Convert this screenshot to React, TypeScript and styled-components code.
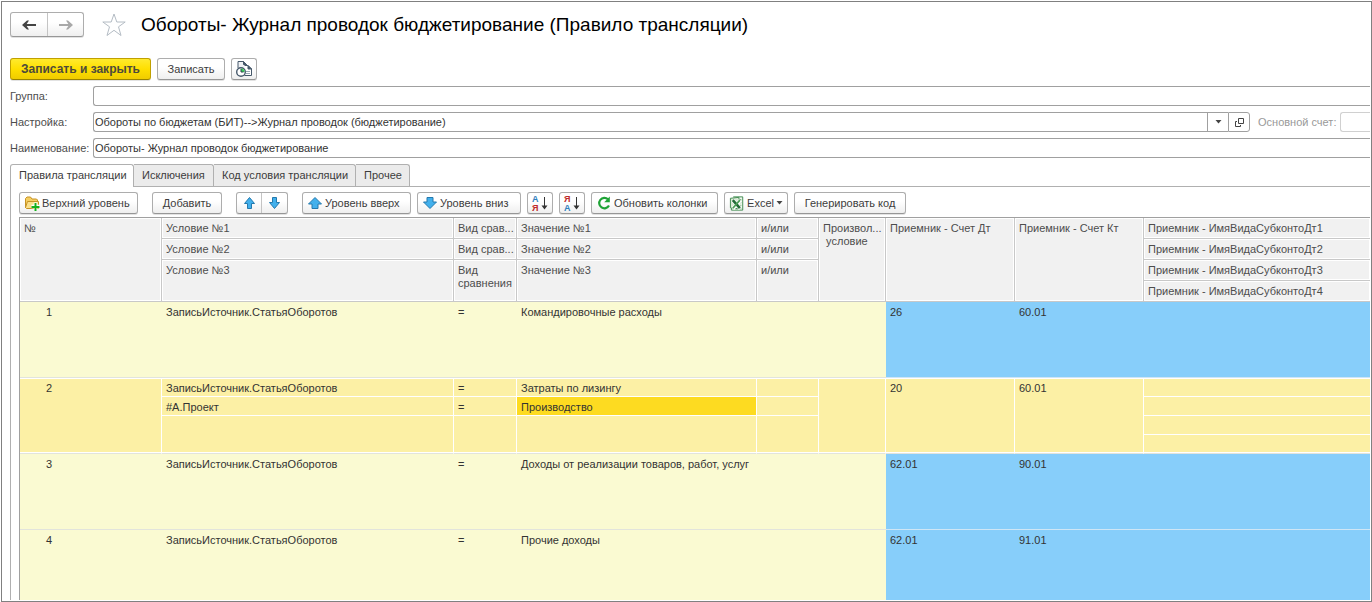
import React from "react";
import styled, { createGlobalStyle, css } from "styled-components";

const GlobalStyle = createGlobalStyle`
  *, *::before, *::after { box-sizing: border-box; }
  body {
    margin: 0;
    background: #fff;
    color: #3c3c3c;
    font-family: "Liberation Sans", Arial, sans-serif;
    font-size: 11px;
    line-height: 13px;
  }
  button, input { font: inherit; color: inherit; margin: 0; }
`;

const LINE = "#a0a0a0";

const Frame = styled.div`
  padding: 1px 0 0 1px;
  height: 100vh;
`;

const Window = styled.main`
  display: flex;
  flex-direction: column;
  height: 100%;
  padding: 10px 1px 1px 8px;
  border: 1px solid #808080;
  overflow: hidden;
`;

const Header = styled.header`
  display: flex;
  align-items: center;
  height: 25px;
  margin-bottom: 21px;
`;

const raised = css`
  border: 1px solid #adadad;
  border-bottom-color: #979797;
  border-radius: 3px;
  background: linear-gradient(#fff 40%, #efefef);
  box-shadow: 0 1px 0 #e2e2e2;
`;

const ButtonGroup = styled.div<{ $height: number }>`
  ${raised}
  display: flex;
  flex: none;
  height: ${(p) => p.$height}px;
  overflow: hidden;
`;

const GroupButton = styled.button<{ $width: number }>`
  display: flex;
  align-items: center;
  justify-content: center;
  width: ${(p) => p.$width}px;
  padding: 0;
  border: 0;
  background: none;
  & + & { border-left: 1px solid #c4c4c4; }
`;

const StarButton = styled.button`
  display: flex;
  margin: 0 15px 0 18px;
  padding: 0;
  border: 0;
  background: none;
`;

const Title = styled.h1`
  margin: 0;
  color: #000;
  font-size: 19px;
  font-weight: 400;
  line-height: 24px;
  white-space: nowrap;
`;

const Bar = styled.div`
  display: flex;
  gap: 6px;
`;

const Button = styled.button<{ $width: number; $icon?: boolean; $primary?: boolean }>`
  ${raised}
  display: flex;
  flex: none;
  align-items: center;
  justify-content: ${(p) => (p.$icon ? "flex-start" : "center")};
  gap: 2px;
  width: ${(p) => p.$width}px;
  height: 22px;
  padding: ${(p) => (p.$icon ? "0 4px" : "0")};
  white-space: nowrap;
  ${(p) =>
    p.$primary &&
    css`
      border-color: #c0a000;
      border-bottom-color: #9a8300;
      background: linear-gradient(#ffea2e, #ffdf00 50%, #f0cc00);
      color: #4d4a3c;
      font-size: 12px;
      font-weight: 700;
    `}
`;

const MenuMark = styled.span`
  display: flex;
  margin-left: auto;
`;

const Fields = styled.div`
  display: grid;
  grid-template-columns: 83px minmax(0, 1fr);
  row-gap: 6px;
  margin: 6px 0;
  align-items: center;
`;

const Label = styled.label<{ $muted?: boolean }>`
  white-space: nowrap;
  color: ${(p) => (p.$muted ? "#999" : "#4d4d4d")};
`;

const TextBox = styled.input<{ $faint?: boolean }>`
  width: 100%;
  height: 20px;
  padding: 0 1px;
  border: 1px solid ${(p) => (p.$faint ? "#d0d0d0" : LINE)};
  border-right: 0;
  border-radius: 3px 0 0 3px;
  background: #fff;
  color: #333;
  outline: 0;
`;

const SettingRow = styled.div`
  display: grid;
  grid-template-columns: minmax(0, 1fr) 82px 30px;
  align-items: center;
`;

const Combo = styled.div`
  display: flex;
  height: 20px;
  margin-right: 8px;
`;

const ComboButton = styled.button<{ $last?: boolean }>`
  display: flex;
  flex: none;
  align-items: center;
  justify-content: center;
  width: ${(p) => (p.$last ? 22 : 21)}px;
  padding: 0;
  border: 1px solid ${LINE};
  border-right-width: ${(p) => (p.$last ? 1 : 0)}px;
  border-radius: ${(p) => (p.$last ? "0 3px 3px 0" : "0")};
  background: #fff;
`;

const Tabs = styled.div`
  display: flex;
  flex: none;
`;

const Tab = styled.button<{ $width: number; $active?: boolean }>`
  width: ${(p) => p.$width}px;
  height: 22px;
  padding: 0 0 0 8px;
  border: 1px solid #b0b0b0;
  border-bottom: 0;
  border-left-width: ${(p) => (p.$active ? 1 : 0)}px;
  border-radius: ${(p) => (p.$active ? "3px 3px 0 0" : "0 3px 0 0")};
  background: ${(p) => (p.$active ? "#fff" : "#ebebeb")};
  text-align: left;
  white-space: nowrap;
  ${(p) =>
    p.$active &&
    css`
      z-index: 1;
      height: 23px;
      margin-bottom: -1px;
      padding-bottom: 1px;
    `}
`;

const Panel = styled.section`
  display: flex;
  flex: 1;
  flex-direction: column;
  min-height: 0;
  padding: 5px 0 0 8px;
  border-top: 1px solid #b0b0b0;
  border-left: 1px solid #b0b0b0;
`;

const Toolbar = styled.div`
  display: flex;
  flex: none;
  gap: 14px;
  margin-bottom: 3px;
`;

const TableArea = styled.div`
  flex: 1;
  min-height: 0;
  overflow: hidden;
  border-top: 1px solid ${LINE};
  border-left: 1px solid ${LINE};
`;

const Table = styled.table`
  width: 100%;
  table-layout: fixed;
  border-collapse: separate;
  border-spacing: 0;
`;

const HeadCell = styled.th`
  height: 21px;
  padding: 4px 0 0 4px;
  border-right: 1px solid #c8c8c8;
  border-bottom: 1px solid #c8c8c8;
  background: #f1f1f1;
  box-shadow: inset 0 0 0 1px #fff;
  color: #4d4d4d;
  font-weight: 400;
  text-align: left;
  vertical-align: top;
  white-space: pre-line;
  overflow: hidden;
  &:last-child { border-right: 0; }
`;

const Indented = styled.span`
  display: block;
  padding-left: 3px;
`;

type CellLook = {
  $blue?: boolean;
  $selected?: boolean;
  $current?: boolean;
  $first?: boolean;
  $last?: boolean;
  $number?: boolean;
};

const cellColor = (p: CellLook) => {
  if (p.$current) return "#fddb21";
  if (p.$selected) return "#fcf0a5";
  return p.$blue ? "#87cefa" : "#fafad2";
};

const Cell = styled.td<CellLook>`
  height: 19px;
  padding: 4px 0 0 ${(p) => (p.$number ? 26 : 4)}px;
  background: ${cellColor};
  color: #333;
  vertical-align: top;
  white-space: nowrap;
  border: 0 solid #fff;
  ${(p) =>
    p.$selected &&
    css`
      border-right-width: 1px;
      border-bottom-width: 1px;
      box-shadow: inset 0 ${p.$first ? 1 : 0}px 0 #fff${p.$last ? ", inset 0 -1px 0 #fff" : ""};
    `}
  ${(p) => p.$last && `border-bottom: 1px solid ${p.$blue && !p.$selected ? "#cfe6f5" : "#e2e4dc"};`}
  &:last-child { border-right: 0; }
`;

const NavArrow = ({ forward }: { forward?: boolean }) => (
  <svg width="16" height="12" viewBox="0 0 16 12" aria-hidden="true">
    <g transform={forward ? "rotate(180 8 6)" : undefined} fill={forward ? "#a8a8a8" : "#444"}>
      <path d="M4 5H15V7H4Z" />
      <path d="M1 6L6 1.500H8L5 6L8 10.500H6Z" />
    </g>
  </svg>
);

const Star = () => (
  <svg width="24" height="24" viewBox="0 0 24 24" aria-hidden="true">
    <path
      d="M12 1L14.800 9H23.200L16.500 13.800L19 22.500L12 17.300L5 22.500L7.500 13.800L0.800 9H9.200Z"
      fill="#fff"
      stroke="#b4bcc4"
    />
  </svg>
);

const ReportIcon = () => (
  <svg width="18" height="18" viewBox="0 0 18 18" aria-hidden="true">
    <path d="M3 8V1.500H8.500L11.500 4.500V14H8" fill="#eef1f4" stroke="#46586a" />
    <path d="M8.500 1.500V4.500H11.500Z" fill="#46586a" stroke="#46586a" />
    <path d="M9.500 5.500H13L16.500 9V15.500H9.500" fill="#fff" stroke="#46586a" />
    <path d="M13 5.500V9H16.500Z" fill="#46586a" stroke="#46586a" />
    <path d="M11 11.500H15M11 13.500H15" stroke="#9aa8b4" />
    <circle cx="6" cy="12" r="4.300" fill="#fff" stroke="#46586a" strokeWidth="1.400" />
    <path d="M6 8.500A3.500 3.500 0 0 1 9.500 12H6Z" fill="#39d05a" />
    <path d="M6 9V12H8.500" fill="none" stroke="#33424f" />
  </svg>
);

const FolderAdd = () => (
  <svg width="16" height="16" viewBox="0 0 16 16" aria-hidden="true">
    <path d="M1.500 13V3.500L3 2H6.500L8 4H12.500L13.500 5V7" fill="#f5cf63" stroke="#c79324" />
    <path d="M1.500 12.500L3.500 6.500H14.500V13.500H2.500Z" fill="#fbe08c" stroke="#c79324" />
    <path d="M11.500 7.500V15.500M7.500 11.500H15.500" stroke="#fff" strokeWidth="3.600" />
    <path d="M11.500 8V16M7.500 12H15.500" stroke="#16b01c" strokeWidth="2" />
  </svg>
);

const BlueArrow = ({ down, wide }: { down?: boolean; wide?: boolean }) => (
  <svg width={wide ? 16 : 13} height="14" viewBox={wide ? "0 0 16 14" : "0 0 13 14"} aria-hidden="true">
    <path
      d={wide ? "M8 1.500L14.500 8H11V12.500H5V8H1.500Z" : "M6.500 1.500L11.500 7.500H8.500V12.500H4.500V7.500H1.500Z"}
      transform={down ? (wide ? "rotate(180 8 7)" : "rotate(180 6.500 7)") : undefined}
      fill="#42b0ec"
      stroke="#2379ae"
    />
  </svg>
);

const SortLetter = styled.text`
  font-family: "Liberation Sans", Arial, sans-serif;
  font-size: 9px;
  font-weight: 700;
`;

const SortIcon = ({ reverse }: { reverse?: boolean }) => (
  <svg width="18" height="18" viewBox="0 0 18 18" aria-hidden="true">
    <SortLetter x="1" y="8" fill={reverse ? "#c02a2a" : "#2f7fbd"}>{reverse ? "Я" : "А"}</SortLetter>
    <SortLetter x="1" y="17" fill={reverse ? "#2f7fbd" : "#c02a2a"}>{reverse ? "А" : "Я"}</SortLetter>
    <path d="M13.500 3V13" stroke="#333" />
    <path d="M10.500 11.500H16.500L13.500 15.500Z" fill="#333" />
  </svg>
);

const RefreshIcon = () => (
  <svg width="16" height="16" viewBox="0 0 16 16" aria-hidden="true">
    <path d="M12 4.300A5.200 5.200 0 1 0 13 10.500" fill="none" stroke="#1fa336" strokeWidth="2.200" />
    <path d="M13.800 1.500V7.200H8.200Z" fill="#1fa336" />
  </svg>
);

const ExcelIcon = () => (
  <svg width="17" height="17" viewBox="0 0 17 17" aria-hidden="true">
    <path d="M4.500 1.500H14.500V15.500H2.500V12" fill="#f2f8f0" stroke="#3d8a4d" />
    <path d="M10 4.500H13M11 7.500H13M12 10.500H13M5 13.500H13" stroke="#7db585" strokeWidth="1.500" />
    <path d="M1.500 3L10.500 2V4.500L9 14L1.500 13Z" fill="#dcebd8" stroke="#3d8a4d" />
    <path d="M4 5L12 14M12 5L4 14" stroke="#fff" strokeWidth="4" />
    <path d="M4 5L11.500 13.500" stroke="#226b37" strokeWidth="2.800" />
    <path d="M11.500 5L4 13.500" stroke="#4b9d56" strokeWidth="1.800" />
  </svg>
);

const Caret = () => (
  <svg width="7" height="4" viewBox="0 0 7 4" aria-hidden="true">
    <path d="M0.500 0H6.500L3.500 3.500Z" fill="#444" />
  </svg>
);

const OpenIcon = () => (
  <svg width="11" height="11" viewBox="0 0 11 11" aria-hidden="true">
    <path d="M4.500 1.500H9.500V6.500H4.500Z" fill="none" stroke="#444" />
    <path d="M3 4.500H1.500V9.500H6.500V8" fill="none" stroke="#444" />
  </svg>
);

type Condition = { field: string; value: string; current?: boolean };
type Rule = { id: number; conditions: Condition[]; debit: string; credit: string; selected?: boolean };

const SOURCE = "ЗаписьИсточник.СтатьяОборотов";

const rules: Rule[] = [
  { id: 1, conditions: [{ field: SOURCE, value: "Командировочные расходы" }], debit: "26", credit: "60.01" },
  {
    id: 2,
    selected: true,
    conditions: [
      { field: SOURCE, value: "Затраты по лизингу" },
      { field: "#А.Проект", value: "Производство", current: true },
    ],
    debit: "20",
    credit: "60.01",
  },
  { id: 3, conditions: [{ field: SOURCE, value: "Доходы от реализации товаров, работ, услуг" }], debit: "62.01", credit: "90.01" },
  { id: 4, conditions: [{ field: SOURCE, value: "Прочие доходы" }], debit: "62.01", credit: "91.01" },
];

const columnWidths = [142, 292, 63, 240, 62, 67, 129, 129];

const HeaderRow = ({ line }: { line: number }) => {
  const span = line === 3 ? 2 : 1;
  return (
    <tr>
      {line === 1 && <HeadCell rowSpan={4}>№</HeadCell>}
      {line < 4 && (
        <>
          <HeadCell rowSpan={span}>Условие №{line}</HeadCell>
          <HeadCell rowSpan={span}>{line === 3 ? "Вид\nсравнения" : "Вид срав..."}</HeadCell>
          <HeadCell rowSpan={span}>Значение №{line}</HeadCell>
          <HeadCell rowSpan={span}>и/или</HeadCell>
        </>
      )}
      {line === 1 && (
        <>
          <HeadCell rowSpan={4}>
            Произвол...<Indented>условие</Indented>
          </HeadCell>
          <HeadCell rowSpan={4}>Приемник - Счет Дт</HeadCell>
          <HeadCell rowSpan={4}>Приемник - Счет Кт</HeadCell>
        </>
      )}
      <HeadCell>Приемник - ИмяВидаСубконтоДт{line}</HeadCell>
    </tr>
  );
};

const RuleRows = ({ rule }: { rule: Rule }) => {
  const whole = { rowSpan: 4, $selected: rule.selected, $first: true, $last: true };
  return (
    <tbody>
      {[0, 1, 2, 3].map((line) => {
        const item = rule.conditions[line];
        const part = {
          rowSpan: line === 2 ? 2 : 1,
          $selected: rule.selected,
          $first: line === 0,
          $last: line === 2,
        };
        return (
          <tr key={line}>
            {line === 0 && <Cell {...whole} $number>{rule.id}</Cell>}
            {line < 3 && (
              <>
                <Cell {...part}>{item?.field}</Cell>
                <Cell {...part}>{item && "="}</Cell>
                <Cell {...part} $current={item?.current}>{item?.value}</Cell>
                <Cell {...part} />
              </>
            )}
            {line === 0 && (
              <>
                <Cell {...whole} />
                <Cell {...whole} $blue>{rule.debit}</Cell>
                <Cell {...whole} $blue>{rule.credit}</Cell>
              </>
            )}
            <Cell $blue $selected={rule.selected} $first={line === 0} $last={line === 3} />
          </tr>
        );
      })}
    </tbody>
  );
};

export default function App() {
  return (
    <Frame>
      <GlobalStyle />
      <Window>
        <Header>
          <ButtonGroup $height={25}>
            <GroupButton $width={36} aria-label="Назад"><NavArrow /></GroupButton>
            <GroupButton $width={36} aria-label="Вперед"><NavArrow forward /></GroupButton>
          </ButtonGroup>
          <StarButton aria-label="В избранное"><Star /></StarButton>
          <Title>Обороты- Журнал проводок бюджетирование (Правило трансляции)</Title>
        </Header>

        <Bar>
          <Button $width={141} $primary>Записать и закрыть</Button>
          <Button $width={68}>Записать</Button>
          <Button $width={26} aria-label="Отчет"><ReportIcon /></Button>
        </Bar>

        <Fields>
          <Label htmlFor="group">Группа:</Label>
          <TextBox id="group" />
          <Label htmlFor="setting">Настройка:</Label>
          <SettingRow>
            <Combo>
              <TextBox id="setting" defaultValue="Обороты по бюджетам (БИТ)-->Журнал проводок (бюджетирование)" />
              <ComboButton aria-label="Выбрать"><Caret /></ComboButton>
              <ComboButton $last aria-label="Открыть"><OpenIcon /></ComboButton>
            </Combo>
            <Label htmlFor="account" $muted>Основной счет:</Label>
            <TextBox id="account" $faint disabled />
          </SettingRow>
          <Label htmlFor="name">Наименование:</Label>
          <TextBox id="name" defaultValue="Обороты- Журнал проводок бюджетирование" />
        </Fields>

        <Tabs role="tablist">
          <Tab role="tab" aria-selected $width={124} $active>Правила трансляции</Tab>
          <Tab role="tab" $width={80}>Исключения</Tab>
          <Tab role="tab" $width={142}>Код условия трансляции</Tab>
          <Tab role="tab" $width={54}>Прочее</Tab>
        </Tabs>

        <Panel>
          <Toolbar>
            <Button $width={119} $icon><FolderAdd />Верхний уровень</Button>
            <Button $width={70}>Добавить</Button>
            <ButtonGroup $height={22}>
              <GroupButton $width={24} aria-label="Переместить вверх"><BlueArrow /></GroupButton>
              <GroupButton $width={26} aria-label="Переместить вниз"><BlueArrow down /></GroupButton>
            </ButtonGroup>
            <Bar>
              <Button $width={109} $icon><BlueArrow wide />Уровень вверх</Button>
              <Button $width={104} $icon><BlueArrow wide down />Уровень вниз</Button>
              <Button $width={26} aria-label="По возрастанию"><SortIcon /></Button>
              <Button $width={26} aria-label="По убыванию"><SortIcon reverse /></Button>
              <Button $width={127} $icon><RefreshIcon />Обновить колонки</Button>
              <Button $width={64} $icon><ExcelIcon />Excel<MenuMark><Caret /></MenuMark></Button>
              <Button $width={112}>Генерировать код</Button>
            </Bar>
          </Toolbar>

          <TableArea>
            <Table>
              <colgroup>
                {columnWidths.map((width, i) => <col key={i} width={width} />)}
                <col />
              </colgroup>
              <thead>
                {[1, 2, 3, 4].map((line) => <HeaderRow key={line} line={line} />)}
              </thead>
              {rules.map((rule) => <RuleRows key={rule.id} rule={rule} />)}
            </Table>
          </TableArea>
        </Panel>
      </Window>
    </Frame>
  );
}
